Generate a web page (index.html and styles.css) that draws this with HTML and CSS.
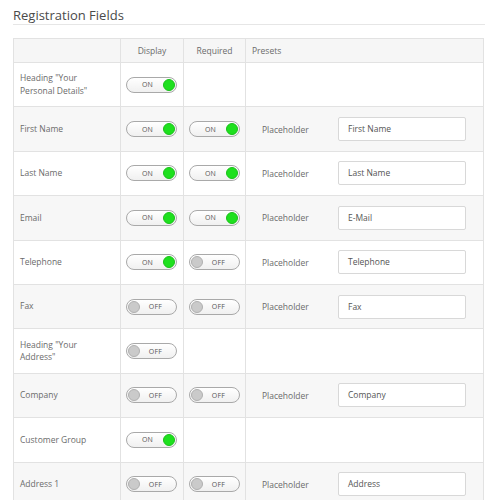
FILE: index.html
```html
<!DOCTYPE html>
<html>
<head>
<meta charset="utf-8">
<link rel="stylesheet" href="styles.css">
</head>
<body>
<h2 class="title">Registration Fields</h2>
<table class="fields">
  <colgroup><col class="c1"><col class="c2"><col class="c3"><col class="c4"></colgroup>
  <thead>
    <tr><th></th><th class="center">Display</th><th class="center">Required</th><th class="left">Presets</th></tr>
  </thead>
  <tbody>
    <tr>
      <td class="label">Heading "Your Personal Details"</td>
      <td class="tg"><span class="toggle on"><span class="txt">ON</span><span class="knob"></span></span></td>
      <td></td><td></td>
    </tr>
    <tr class="alt">
      <td class="label">First Name</td>
      <td class="tg"><span class="toggle on"><span class="txt">ON</span><span class="knob"></span></span></td>
      <td class="tg"><span class="toggle on"><span class="txt">ON</span><span class="knob"></span></span></td>
      <td><div class="preset"><span class="ph">Placeholder</span><span class="input">First Name</span></div></td>
    </tr>
    <tr>
      <td class="label">Last Name</td>
      <td class="tg"><span class="toggle on"><span class="txt">ON</span><span class="knob"></span></span></td>
      <td class="tg"><span class="toggle on"><span class="txt">ON</span><span class="knob"></span></span></td>
      <td><div class="preset"><span class="ph">Placeholder</span><span class="input">Last Name</span></div></td>
    </tr>
    <tr class="alt">
      <td class="label">Email</td>
      <td class="tg"><span class="toggle on"><span class="txt">ON</span><span class="knob"></span></span></td>
      <td class="tg"><span class="toggle on"><span class="txt">ON</span><span class="knob"></span></span></td>
      <td><div class="preset"><span class="ph">Placeholder</span><span class="input">E-Mail</span></div></td>
    </tr>
    <tr>
      <td class="label">Telephone</td>
      <td class="tg"><span class="toggle on"><span class="txt">ON</span><span class="knob"></span></span></td>
      <td class="tg"><span class="toggle off"><span class="knob"></span><span class="txt">OFF</span></span></td>
      <td><div class="preset"><span class="ph">Placeholder</span><span class="input">Telephone</span></div></td>
    </tr>
    <tr class="alt">
      <td class="label">Fax</td>
      <td class="tg"><span class="toggle off"><span class="knob"></span><span class="txt">OFF</span></span></td>
      <td class="tg"><span class="toggle off"><span class="knob"></span><span class="txt">OFF</span></span></td>
      <td><div class="preset"><span class="ph">Placeholder</span><span class="input">Fax</span></div></td>
    </tr>
    <tr>
      <td class="label">Heading "Your Address"</td>
      <td class="tg"><span class="toggle off"><span class="knob"></span><span class="txt">OFF</span></span></td>
      <td></td><td></td>
    </tr>
    <tr class="alt">
      <td class="label">Company</td>
      <td class="tg"><span class="toggle off"><span class="knob"></span><span class="txt">OFF</span></span></td>
      <td class="tg"><span class="toggle off"><span class="knob"></span><span class="txt">OFF</span></span></td>
      <td><div class="preset"><span class="ph">Placeholder</span><span class="input">Company</span></div></td>
    </tr>
    <tr>
      <td class="label">Customer Group</td>
      <td class="tg"><span class="toggle on"><span class="txt">ON</span><span class="knob"></span></span></td>
      <td></td><td></td>
    </tr>
    <tr class="alt">
      <td class="label">Address 1</td>
      <td class="tg"><span class="toggle off"><span class="knob"></span><span class="txt">OFF</span></span></td>
      <td class="tg"><span class="toggle off"><span class="knob"></span><span class="txt">OFF</span></span></td>
      <td><div class="preset"><span class="ph">Placeholder</span><span class="input">Address</span></div></td>
    </tr>
  </tbody>
</table>
</body>
</html>
```

FILE: styles.css
```css
html, body {
  margin: 0;
  padding: 0;
  background: #fff;
}
body {
  padding: 0 15px 0 13px;
  font-family: "Open Sans", "DejaVu Sans", sans-serif;
  color: #6b6b6b;
}
.title {
  margin: 0;
  padding-top: 6px;
  height: 18px;
  font-size: 13px;
  font-weight: normal;
  line-height: 18px;
  color: #4a4a4a;
  border-bottom: 1px solid #e6e6e6;
}
.fields {
  margin-top: 13px;
  width: 470px;
  border-collapse: collapse;
  table-layout: fixed;
  font-size: 8.5px;
}
.c1 { width: 107px; }
.c2 { width: 63px; }
.c3 { width: 62px; }
.c4 { width: 238px; }
.fields th, .fields td {
  border: 1px solid #e2e2e2;
  padding: 0;
  vertical-align: middle;
}
.fields thead tr {
  height: 24px;
  background: #f6f6f6;
}
.fields th {
  font-weight: normal;
  color: #6b6b6b;
}
.fields th.center { text-align: center; }
.fields th.left { text-align: left; padding-left: 6px; }
.fields tbody tr { height: 44.4px; }
.fields tbody tr.alt { background: #f7f7f7; }
.label {
  padding: 0 8px 0 6px !important;
  line-height: 12.5px;
  color: #6b6b6b;
}
.tg { padding-left: 5px !important; }
.toggle {
  display: flex;
  align-items: center;
  box-sizing: border-box;
  width: 51px;
  height: 16px;
  border: 1px solid #a9a9a9;
  border-radius: 8px;
  background: linear-gradient(#ffffff, #f0f0f0);
  padding: 0 1px;
}
.toggle .knob {
  width: 12px;
  height: 12px;
  border-radius: 50%;
  box-sizing: border-box;
}
.toggle.on .knob {
  background: #1ee01e;
  border: 1px solid #19c219;
}
.toggle.off .knob {
  background: #cacaca;
  border: 1px solid #b0b0b0;
}
.toggle .txt {
  flex: 1;
  text-align: center;
  font-size: 7px;
  color: #555;
  letter-spacing: 0.2px;
}
.toggle.on .txt { padding-left: 4px; }
.toggle.off .txt { padding-right: 4px; }
.preset {
  display: flex;
  align-items: center;
  padding-left: 16px;
}
.ph {
  width: 76px;
  color: #6b6b6b;
}
.input {
  box-sizing: border-box;
  width: 128px;
  height: 24px;
  border: 1px solid #d8d8d8;
  border-radius: 2px;
  background: #fff;
  padding-left: 9px;
  line-height: 22px;
  color: #555;
}
```
